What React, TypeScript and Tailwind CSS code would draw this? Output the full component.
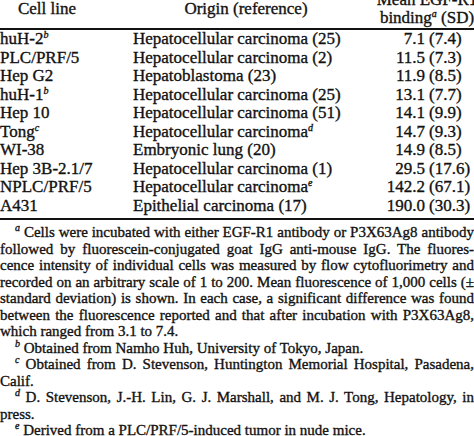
import React from "react";

type Row = { cell: string; cs?: string; origin: string; os?: string; ref?: string; mean: string; sd: string };

const rows: Row[] = [
  { cell: "huH-2", cs: "b", origin: "Hepatocellular carcinoma", ref: "(25)", mean: "7.1", sd: "(7.4)" },
  { cell: "PLC/PRF/5", origin: "Hepatocellular carcinoma", ref: "(2)", mean: "11.5", sd: "(7.3)" },
  { cell: "Hep G2", origin: "Hepatoblastoma", ref: "(23)", mean: "11.9", sd: "(8.5)" },
  { cell: "huH-1", cs: "b", origin: "Hepatocellular carcinoma", ref: "(25)", mean: "13.1", sd: "(7.7)" },
  { cell: "Hep 10", origin: "Hepatocellular carcinoma", ref: "(51)", mean: "14.1", sd: "(9.9)" },
  { cell: "Tong", cs: "c", origin: "Hepatocellular carcinoma", os: "d", mean: "14.7", sd: "(9.3)" },
  { cell: "WI-38", origin: "Embryonic lung", ref: "(20)", mean: "14.9", sd: "(8.5)" },
  { cell: "Hep 3B-2.1/7", origin: "Hepatocellular carcinoma", ref: "(1)", mean: "29.5", sd: "(17.6)" },
  { cell: "NPLC/PRF/5", origin: "Hepatocellular carcinoma", os: "e", mean: "142.2", sd: "(67.1)" },
  { cell: "A431", origin: "Epithelial carcinoma", ref: "(17)", mean: "190.0", sd: "(30.3)" },
];

function Sup({ c }: { c: string }) {
  return <span className="relative -top-[6px] text-[10px] italic leading-none">{c}</span>;
}

function Line({ children, justify = true, indent = false }: { children: React.ReactNode; justify?: boolean; indent?: boolean }) {
  return (
    <div
      className={
        "h-[16.5px] whitespace-nowrap " +
        (justify ? "text-justify [text-align-last:justify] " : "text-left ") +
        (indent ? "pl-[15px]" : "")
      }
    >
      {children}
    </div>
  );
}

export default function App() {
  return (
    <div
      className="w-[474px] h-[436px] overflow-hidden bg-white text-[#121212] [-webkit-text-stroke:0.35px_#121212]"
      style={{ fontFamily: '"Liberation Serif", "Times New Roman", serif' }}
    >
      {/* header */}
      <div className="-mt-[9.5px] flex text-[17px] leading-[18px] whitespace-nowrap">
        <div className="w-[94px] flex items-center justify-center">Cell line</div>
        <div className="w-[304px] flex items-center justify-center">Origin (reference)</div>
        <div className="w-[94px] -ml-[18px] flex flex-col items-center">
          <div>Mean EGF-R1</div>
          <div>
            binding<Sup c="a" /> (SD)
          </div>
        </div>
      </div>
      <div className="mt-[1.5px] h-[2px] bg-[#121212]" />
      {/* body */}
      <div className="text-[17px] leading-[18px]">
        {rows.map((r) => (
          <div key={r.cell} className="flex h-[18.5px] items-center">
            <div className="w-[133px] whitespace-nowrap">
              {r.cell}
              {r.cs && <Sup c={r.cs} />}
            </div>
            <div className="w-[240px] whitespace-nowrap">
              {r.origin}
              {r.os && <Sup c={r.os} />}
              {r.ref && <> {r.ref}</>}
            </div>
            <div className="w-[52px] text-right whitespace-nowrap">{r.mean}</div>
            <div className="flex-1 pl-[4px] whitespace-nowrap">{r.sd}</div>
          </div>
        ))}
      </div>
      <div className="mt-[3px] h-[2px] bg-[#121212]" />
      {/* footnotes */}
      <div className="pt-[4px] text-[15px] leading-[16.5px]">
        <Line indent>
          <Sup c="a" /> Cells were incubated with either EGF-R1 antibody or P3X63Ag8 antibody
        </Line>
        <Line>followed by fluorescein-conjugated goat IgG anti-mouse IgG. The fluores-</Line>
        <Line>cence intensity of individual cells was measured by flow cytofluorimetry and</Line>
        <Line>recorded on an arbitrary scale of 1 to 200. Mean fluorescence of 1,000 cells (±</Line>
        <Line>standard deviation) is shown. In each case, a significant difference was found</Line>
        <Line>between the fluorescence reported and that after incubation with P3X63Ag8,</Line>
        <Line justify={false}>which ranged from 3.1 to 7.4.</Line>
        <Line indent justify={false}>
          <Sup c="b" /> Obtained from Namho Huh, University of Tokyo, Japan.
        </Line>
        <Line indent>
          <Sup c="c" /> Obtained from D. Stevenson, Huntington Memorial Hospital, Pasadena,
        </Line>
        <Line justify={false}>Calif.</Line>
        <Line indent>
          <Sup c="d" /> D. Stevenson, J.-H. Lin, G. J. Marshall, and M. J. Tong, Hepatology, in
        </Line>
        <Line justify={false}>press.</Line>
        <Line indent justify={false}>
          <Sup c="e" /> Derived from a PLC/PRF/5-induced tumor in nude mice.
        </Line>
      </div>
    </div>
  );
}
